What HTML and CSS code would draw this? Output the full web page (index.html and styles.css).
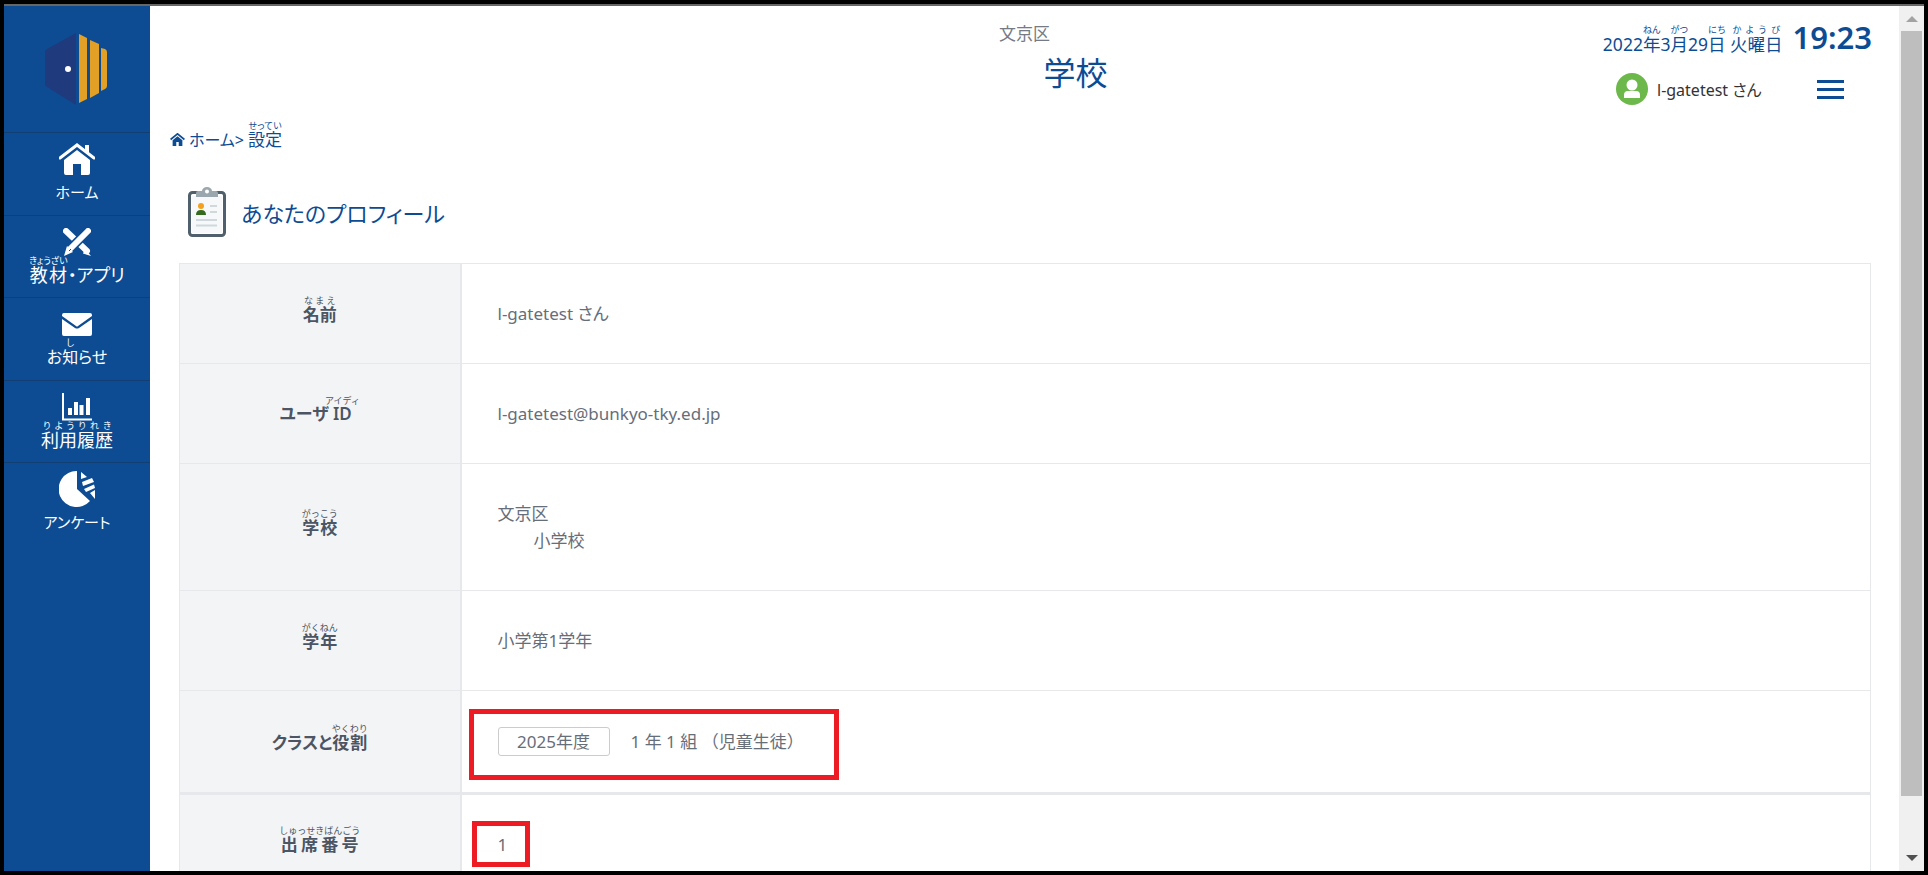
FILE: index.html
```html
<!DOCTYPE html>
<html lang="ja">
<head>
  <meta charset="UTF-8" />
  <title>あなたのプロフィール</title>
  <link rel="stylesheet" href="styles.css">
</head>
<body>
  <div class="frame">
    <nav class="sidebar">
      <div class="logo">
        <svg width="64" height="72" viewBox="0 0 64 72">
          <path d="M31 0V72L2 54Q0 53 0 51V19Q0 17 2 16Z" fill="#1f3a7d"/>
          <circle cx="23" cy="36" r="3" fill="#fff"/>
          <path d="M34 1L42 5V66L34 70Z" fill="#e3a026"/>
          <path d="M45 7L54 11V60L45 65Z" fill="#e3a026"/>
          <path d="M56 15L60 16Q62 17 62 19V53Q62 55 60 56L56 58Z" fill="#e3a026"/>
        </svg>
      </div>
      <a class="nav-item" href="#">
        <span class="nav-icon">
          <svg width="36" height="32" viewBox="0 0 36 32">
            <path d="M1 15L18 2L35 15" fill="none" stroke="#fff" stroke-width="3" stroke-linecap="round"/>
            <path d="M26 2H30V10L26 7Z" fill="#fff"/>
            <path d="M5 17L18 7L31 17V30Q31 32 29 32H22V21H14V32H7Q5 32 5 30Z" fill="#fff"/>
          </svg>
        </span>
        <span class="nav-label kana">ホーム</span>
      </a>
      <a class="nav-item" href="#">
        <span class="nav-icon">
          <svg width="28" height="28" viewBox="0 0 28 28">
            <path d="M3 3L24 23" fill="none" stroke="#fff" stroke-width="6" stroke-linecap="round"/>
            <path d="M22 20.500L28 28L20 25.500Z" fill="#fff"/>
            <path d="M24 4L6 22" fill="none" stroke="#0d4c93" stroke-width="9"/>
            <path d="M25 3L7 21" fill="none" stroke="#fff" stroke-width="6" stroke-linecap="round"/>
            <path d="M4 18L10 24L1 28Z" fill="#fff"/>
            <path d="M6 23L8 21" stroke="#0d4c93" stroke-width="1"/>
          </svg>
        </span>
        <span class="nav-label"><ruby>教材<rt>きょうざい</rt></ruby>・アプリ</span>
      </a>
      <a class="nav-item" href="#">
        <span class="nav-icon">
          <svg width="30" height="23" viewBox="0 0 30 23">
            <path d="M2 0H28Q30 0 30 2V3L16 13Q15 14 14 13L0 3V2Q0 0 2 0Z" fill="#fff"/>
            <path d="M0 6L13 15Q15 16 17 15L30 6V21Q30 23 28 23H2Q0 23 0 21Z" fill="#fff"/>
          </svg>
        </span>
        <span class="nav-label notice">お<ruby>知<rt>し</rt></ruby>らせ</span>
      </a>
      <a class="nav-item" href="#">
        <span class="nav-icon">
          <svg width="30" height="28" viewBox="0 0 30 28">
            <path d="M1 0V26.500H30" fill="none" stroke="#fff" stroke-width="2"/>
            <path d="M6 15H10V22H6ZM12 9H16V22H12ZM17.500 12H21.500V22H17.500ZM24 5H28V22H24Z" fill="#fff"/>
          </svg>
        </span>
        <span class="nav-label"><ruby>利用履歴<rt>りようりれき</rt></ruby></span>
      </a>
      <a class="nav-item" href="#">
        <span class="nav-icon">
          <svg width="36" height="36" viewBox="0 0 36 36">
            <path d="M18 0V18L31 30A18 18 0 1 1 18 0Z" fill="#fff"/>
            <path d="M22 1L28 6L22 8ZM23 11L33 7L35 11L24 15ZM25 18L35 13.500L36 17L27 21ZM31 22L36 19V28Z" fill="#fff"/>
          </svg>
        </span>
        <span class="nav-label kana">アンケート</span>
      </a>
    </nav>

    <div class="content">
      <header class="topbar">
        <div></div>
        <div class="place">
          <div class="ward">文京区</div>
          <div class="school">学校</div>
        </div>
        <div class="status">
          <div class="clock">
            <span class="date">2022<ruby>年<rt>ねん</rt></ruby>3<ruby>月<rt>がつ</rt></ruby>29<ruby>日<rt>にち</rt></ruby> <ruby>火曜日<rt>かようび</rt></ruby></span>
            <span class="time">19:23</span>
          </div>
          <div class="user">
            <svg width="32" height="32" viewBox="0 0 32 32">
              <circle cx="16" cy="16" r="16" fill="#6db84b"/>
              <circle cx="16" cy="12" r="5.500" fill="#fff"/>
              <path d="M8 25V22Q8 18 12 18H20Q24 18 24 22V25Z" fill="#fff"/>
            </svg>
            <span class="user-name">l-gatetest さん</span>
            <div class="burger"><span></span><span></span><span></span></div>
          </div>
        </div>
      </header>

      <div class="breadcrumb">
        <svg width="15" height="13" viewBox="0 0 36 32">
          <path d="M1 16L18 2L35 16" fill="none" stroke="#0d4c93" stroke-width="4"/>
          <path d="M6 18L18 8L30 18V32H21V22H15V32H6Z" fill="#0d4c93"/>
        </svg>
        <span class="crumb-home">ホーム&gt;</span>
        <ruby>設定<rt>せってい</rt></ruby>
      </div>

      <div class="page-title">
        <svg width="38" height="50" viewBox="0 0 38 50">
          <rect x="1.500" y="5.500" width="35" height="43" rx="3" fill="#fff" stroke="#4f5f6b" stroke-width="3"/>
          <rect x="4" y="9" width="30" height="37" fill="#f7f8f9"/>
          <path d="M8 10V6Q8 4 10 4H14A5 4 0 0 1 24 4H28Q30 4 30 6V10Z" fill="#9aa7ae"/>
          <circle cx="19" cy="4.500" r="2" fill="#fff"/>
          <circle cx="13" cy="19" r="3" fill="#f5a01c"/>
          <path d="M8 28Q8 23 13 23Q18 23 18 28Z" fill="#356b1c"/>
          <path d="M22 19H29M22 25H29M8 33H29M8 38.500H29" stroke="#d0d8dc" stroke-width="2"/>
        </svg>
        <h1>あなたのプロフィール</h1>
      </div>

      <table class="profile">
        <tr class="row-name">
          <th><ruby>名前<rt>なまえ</rt></ruby></th>
          <td>l-gatetest さん</td>
        </tr>
        <tr class="row-id">
          <th>ユーザ<ruby>ID<rt>アイディ</rt></ruby></th>
          <td>l-gatetest@bunkyo-tky.ed.jp</td>
        </tr>
        <tr class="row-school">
          <th><ruby>学校<rt>がっこう</rt></ruby></th>
          <td>文京区<br><span class="indent">小学校</span></td>
        </tr>
        <tr class="row-grade">
          <th><ruby>学年<rt>がくねん</rt></ruby></th>
          <td>小学第1学年</td>
        </tr>
        <tr class="row-class">
          <th>クラスと<ruby>役割<rt>やくわり</rt></ruby></th>
          <td>
            <span class="year">2025年度</span><span class="class-name">1 年 1 組 （児童生徒）</span>
            <div class="mark mark-class"></div>
          </td>
        </tr>
        <tr class="row-number">
          <th><ruby>出席番号<rt>しゅっせきばんごう</rt></ruby></th>
          <td>1<div class="mark mark-number"></div></td>
        </tr>
      </table>
    </div>

    <div class="scrollbar">
      <div class="arrow-up"></div>
      <div class="thumb"></div>
      <div class="arrow-down"></div>
    </div>
  </div>
</body>
</html>
```

FILE: styles.css
```css
html, body {
    height: 100%;
}

body {
    margin: 0;
    background-color: #000;
    overflow: hidden;
    font-family: "Noto Sans", "Noto Sans CJK JP", sans-serif;
    font-feature-settings: "palt";
}

a {
    color: inherit;
    text-decoration: none;
}

rt {
    font-size: 9px;
    font-weight: normal;
    line-height: 9px;
}

.frame {
    display: flex;
    height: 865px;
    margin: 4px 4px 0 4px;
    border-top: 2px solid #666;
    background-color: #fff;
    overflow: hidden;
}

/* サイドバー */
.sidebar {
    flex: 0 0 146px;
    background-color: #0d4c93;
    color: white;
}

.logo {
    display: flex;
    justify-content: center;
    align-items: center;
    height: 126px;
}

.nav-item {
    display: block;
    box-sizing: border-box;
    height: 82.5px;
    border-top: 1px solid #123f73;
    padding-top: 8px;
    text-align: center;
}

.nav-icon {
    display: flex;
    justify-content: center;
    align-items: center;
    height: 36px;
}

.nav-label {
    display: flex;
    justify-content: center;
    align-items: flex-end;
    height: 25px;
    font-size: 18px;
    line-height: 20px;
}

.nav-label.kana {
    font-size: 15px;
}

.nav-label.notice {
    font-size: 16px;
}

/* メイン */
.content {
    flex: 1;
    min-width: 0;
    overflow: hidden;
}

.topbar {
    display: grid;
    grid-template-columns: 1fr auto 1fr;
    height: 115px;
}

.place {
    text-align: center;
    padding-top: 17px;
}

.ward {
    font-size: 17px;
    line-height: 22px;
    color: #757a85;
}

.school {
    margin-top: 8px;
    padding-left: 102px;
    font-size: 32px;
    line-height: 40px;
    color: #0d4c93;
}

.status {
    display: flex;
    flex-direction: column;
    align-items: flex-end;
    padding-right: 27px;
}

.clock {
    display: flex;
    align-items: flex-end;
    gap: 10px;
    height: 49px;
    color: #0d4c93;
}

.date {
    font-size: 17.5px;
    line-height: 20px;
    padding-bottom: 1px;
}

.time {
    font-size: 31px;
    font-weight: 600;
    line-height: 36px;
}

.user {
    display: flex;
    align-items: center;
    margin-top: 18px;
    margin-right: 28px;
}

.user-name {
    margin-left: 9px;
    width: 160px;
    font-size: 16px;
    color: #333;
}

.burger {
    display: flex;
    flex-direction: column;
    gap: 5px;
    width: 27px;
}

.burger span {
    height: 3px;
    background-color: #0d4c93;
}

.breadcrumb {
    display: flex;
    align-items: flex-end;
    gap: 4px;
    height: 29px;
    padding-left: 20px;
    font-size: 17px;
    line-height: 20px;
    color: #0d4c93;
}

.breadcrumb svg {
    margin-bottom: 4px;
}

.crumb-home {
    font-size: 16px;
}

.page-title {
    display: flex;
    align-items: center;
    gap: 15px;
    height: 50px;
    margin: 37px 0 26px 38px;
}

.page-title h1 {
    margin: 0;
    font-size: 22px;
    font-weight: normal;
    color: #0d4c93;
}

/* プロフィール表 */
.profile {
    width: 1692px;
    margin-left: 29px;
    border-collapse: collapse;
    table-layout: fixed;
}

.profile th, .profile td {
    box-sizing: border-box;
    border: 1px solid #e6e8ec;
    position: relative;
}

.profile th {
    width: 281px;
    padding: 0 0 7px 0;
    background-color: #f3f4f6;
    border-right-width: 2px;
    font-size: 17px;
    font-weight: 600;
    line-height: 20px;
    color: #4b5563;
}

.profile th rt {
    font-feature-settings: normal;
}

.profile td {
    padding: 0 36px;
    font-size: 17px;
    line-height: 27px;
    color: #666e7a;
}

.row-name, .row-id {
    height: 100px;
}

.row-school {
    height: 127px;
}

.row-grade {
    height: 100px;
}

.row-class {
    height: 103px;
}

.row-class th, .row-class td {
    border-bottom-width: 3px;
}

.row-number {
    height: 100px;
}

.indent {
    padding-left: 36px;
}

.year {
    display: inline-block;
    width: 110px;
    height: 27px;
    border: 1px solid #ccc;
    border-radius: 3px;
    line-height: 27px;
    text-align: center;
}

.class-name {
    margin-left: 21px;
    font-feature-settings: normal;
}

/* 赤枠の注記 */
.mark {
    position: absolute;
    box-sizing: border-box;
    border: 5px solid #ed1c24;
}

.mark-class {
    left: 7px;
    top: 18px;
    width: 370px;
    height: 71px;
}

.mark-number {
    left: 10px;
    top: 26px;
    width: 58px;
    height: 46px;
}

/* スクロールバー */
.scrollbar {
    position: relative;
    flex: 0 0 25px;
    background-color: #f0f0f0;
}

.thumb {
    position: absolute;
    left: 2px;
    right: 2px;
    top: 25px;
    height: 765px;
    background-color: #bebebe;
}

.arrow-up, .arrow-down {
    position: absolute;
    left: 7px;
    border-left: 6px solid transparent;
    border-right: 6px solid transparent;
}

.arrow-up {
    top: 10px;
    border-bottom: 6px solid #a3a3a3;
}

.arrow-down {
    bottom: 10px;
    border-top: 6px solid #505050;
}
```
